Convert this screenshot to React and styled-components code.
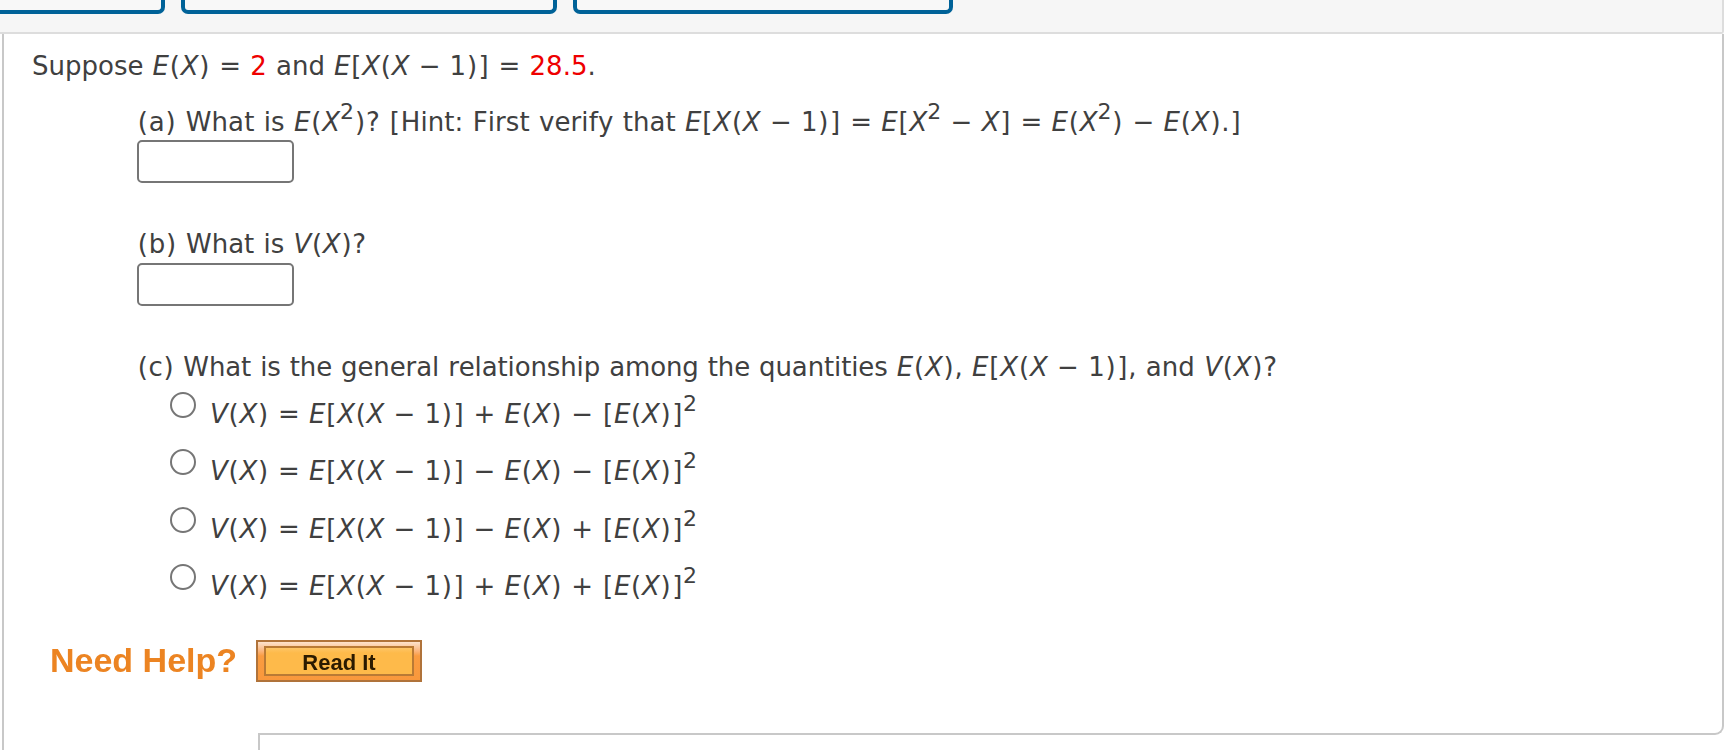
import React from 'react';
import styled, { createGlobalStyle } from 'styled-components';

const GlobalStyle = createGlobalStyle`
  *, *::before, *::after { box-sizing: border-box; }
  html, body { margin: 0; background: #fff; overflow: hidden; }
`;

const Page = styled.div`
  width: 1734px;
  height: 750px;
  overflow: hidden;
  display: flex;
  flex-direction: column;
  background: #fff;
  color: #404040;
  font-family: Verdana, "DejaVu Sans", sans-serif;
  font-size: 26px;
  font-kerning: none;
`;

const TabBar = styled.header`
  flex: none;
  display: flex;
  width: 1724px;
  height: 34px;
  gap: 16px;
  background: #f6f6f6;
  border-right: 2px solid #ddd;
  border-bottom: 2px solid #ddd;
  border-bottom-right-radius: 3px;
`;

const TabButton = styled.button`
  flex: none;
  width: ${(p) => p.$width}px;
  height: 14px;
  padding: 0;
  background: #f8f8f8;
  border: 4px solid #006298;
  border-top: 0;
  border-left-width: ${(p) => (p.$cut ? 0 : 4)}px;
  border-radius: ${(p) => (p.$cut ? '0 0 7px 0' : '0 0 7px 7px')};
`;

const Body = styled.div`
  flex: none;
  display: flex;
  flex-direction: column;
  width: 1722px;
  height: 716px;
  margin-left: 2px;
  border-left: 2px solid #c8c8c8;
`;

const Question = styled.main`
  flex: none;
  display: flex;
  flex-direction: column;
  height: 689px;
  padding: 13px 0 0 28px;
  border-right: 2px solid #c8c8c8;
`;

const Corner = styled.div`
  flex: none;
  align-self: flex-end;
  width: 1466px;
  height: 12px;
  border: solid #c8c8c8;
  border-width: 0 2px 2px 0;
  border-bottom-right-radius: 9px;
`;

const NextBox = styled.div`
  flex: none;
  height: 17px;
  margin: -2px 0 0 254px;
  border-left: 2px solid #c8c8c8;
`;

const Line = styled.div`
  height: ${(p) => p.$height || 38}px;
  line-height: 38px;
  white-space: pre;
  word-spacing: 0.9px;
`;

const Tracked = styled.span`
  letter-spacing: ${(p) => p.$by}px;
`;

const Part = styled.section`
  height: ${(p) => p.$height}px;
  margin-top: ${(p) => p.$gap || 0}px;
  margin-left: 105px;
`;

const Var = styled.i`
  font-style: italic;
`;

const Bracket = styled.span`
  padding: 0 0.75px;
`;

const Given = styled.span`
  color: #e00;
`;

const Power = styled.sup`
  font-size: 22px;
  line-height: 0;
  vertical-align: 12px;
`;

const Answer = styled.input`
  display: block;
  width: 157px;
  height: 43px;
  margin: 0;
  padding: 4px;
  background: #fff;
  border: 2px solid #767676;
  border-radius: 5px;
`;

const Choices = styled.div`
  padding-top: 6px;
`;

const Choice = styled.label`
  display: flex;
  align-items: flex-start;
  height: 57.3px;
  padding-left: 33px;
  gap: 14px;
`;

const Radio = styled.input`
  appearance: none;
  flex: none;
  width: 26px;
  height: 26px;
  margin: 0;
  background: #fff;
  border: 2px solid #767676;
  border-radius: 50%;
`;

const ChoiceText = styled(Line)`
  margin-top: 3px;
`;

const HelpRow = styled.div`
  display: flex;
  align-items: center;
  height: 42px;
  padding-left: 18px;
  font-family: "Liberation Sans", Arial, sans-serif;
  font-weight: 700;
`;

const HelpLabel = styled.span`
  width: 206px;
  padding-bottom: 2px;
  font-size: 34px;
  line-height: 40px;
  color: #ec8422;
  white-space: nowrap;
  filter: blur(0.6px);
`;

const ReadButton = styled.button`
  width: 166px;
  height: 42px;
  padding: 4px 6px;
  border: 2px solid #b0733a;
  background: linear-gradient(#fde3cd 0, #fbb57c 9px, #fa9c40 14px, #f9983c 100%);
  font: inherit;
`;

const ReadFace = styled.span`
  display: flex;
  align-items: center;
  justify-content: center;
  height: 30px;
  padding-top: 3px;
  border: 2px solid #b97a35;
  background: linear-gradient(#fdc566 0, #feba4a 5px);
  color: #2b1a00;
  font-size: 22px;
`;

const ReadText = styled.span`
  filter: blur(0.6px);
`;

const inlineTags = { '*': Var, '~': Given };

/* Markup: *x* variable, ~n~ given value, ^n power; brackets get side bearing. */
function Formula({ text }) {
  const tokens = text.match(/\*[^*]+\*|~[^~]+~|\^\d|[()[\]]|[^*~^()[\]]+/g);
  return tokens.map((t, i) => {
    const Tag = inlineTags[t[0]];
    if (Tag) return <Tag key={i}>{t.slice(1, -1)}</Tag>;
    if (t[0] === '^') return <Power key={i}>{t.slice(1)}</Power>;
    if (/[()[\]]/.test(t)) return <Bracket key={i}>{t}</Bracket>;
    return <React.Fragment key={i}>{t}</React.Fragment>;
  });
}

const choices = [
  ['+', '−'],
  ['−', '−'],
  ['−', '+'],
  ['+', '+'],
];

export default function App() {
  return (
    <Page>
      <GlobalStyle />
      <TabBar>
        <TabButton $width={165} $cut />
        <TabButton $width={376} />
        <TabButton $width={380} />
      </TabBar>
      <Body>
        <Question>
          <Line><Formula text="Suppose *E*(*X*) = ~2~ and *E*[*X*(*X* − 1)] = ~28.5~." /></Line>
          <Part $gap={18} $height={122}>
            <Line $height={37}>
              <Tracked $by={0.09}><Formula text="(a) What is *E*(*X*^2)? [Hint: First verify that " /></Tracked>
              <Tracked $by={0.05}><Formula text="*E*[*X*(*X* − 1)] = *E*[*X*^2 − *X*] = *E*(*X*^2) − *E*(*X*).]" /></Tracked>
            </Line>
            <Answer />
          </Part>
          <Part $height={123}>
            <Line><Formula text="(b) What is *V*(*X*)?" /></Line>
            <Answer />
          </Part>
          <Part $height={292}>
            <Line>
              <Tracked $by={-0.12}><Formula text="(c) What is the general relationship among the quantities " /></Tracked>
              <Tracked $by={0.07}><Formula text="*E*(*X*), *E*[*X*(*X* − 1)], and *V*(*X*)?" /></Tracked>
            </Line>
            <Choices>
              {choices.map(([a, b], i) => (
                <Choice key={i}>
                  <Radio type="radio" name="relation" />
                  <ChoiceText><Formula text={`*V*(*X*) = *E*[*X*(*X* − 1)] ${a} *E*(*X*) ${b} [*E*(*X*)]^2`} /></ChoiceText>
                </Choice>
              ))}
            </Choices>
          </Part>
          <HelpRow>
            <HelpLabel>Need Help?</HelpLabel>
            <ReadButton><ReadFace><ReadText>Read It</ReadText></ReadFace></ReadButton>
          </HelpRow>
        </Question>
        <Corner />
        <NextBox />
      </Body>
    </Page>
  );
}
